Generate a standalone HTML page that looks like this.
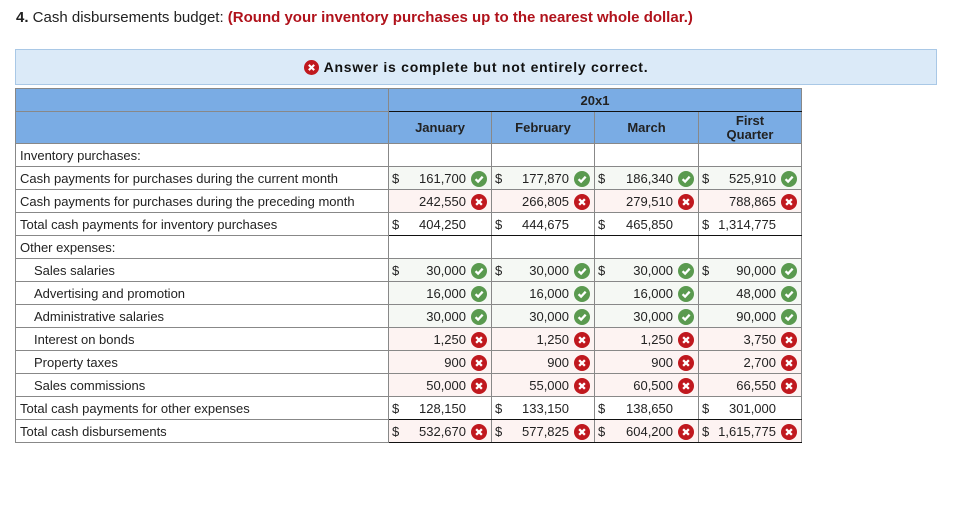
<!DOCTYPE html>
<html><head><meta charset="utf-8"><style>
body{margin:0;background:#fff;width:969px;height:509px;position:relative;font-family:"Liberation Sans",Arial,sans-serif;color:#222;overflow:hidden}
.title{position:absolute;left:16px;top:9px;font-size:15px;color:#222}
.title b.r{color:#b0121b}
.banner{position:absolute;left:15px;top:49px;width:920px;height:34px;background:#dbeaf8;border:1px solid #a9c8e6;text-align:center;font-size:14px;font-weight:bold;line-height:35px;color:#111;letter-spacing:0.75px}
.banner svg{vertical-align:-3px;margin-right:5px}
table{position:absolute;left:15px;top:88px;border-collapse:collapse;table-layout:fixed;font-size:13px}
td{border:1px solid #888;height:22px;padding:0;white-space:nowrap}
.h{background:#7aace4;color:#222;font-weight:bold;text-align:center;font-size:13px}
.l{padding-left:4px}
.i{padding-left:18px}
.d{position:relative}
.d .s{position:absolute;left:3px;top:4px}
.d .n{position:absolute;right:25px;top:4px}
.d svg{position:absolute;right:4px;top:4px}
.g{background:#f5f8f4}.x{background:#fdf3f2}
.tb{border-top:1px solid #111}
.bb{border-bottom:1px solid #111}
</style></head><body>
<div class="title"><b>4.</b> Cash disbursements budget: <b class="r">(Round your inventory purchases up to the nearest whole dollar.)</b></div>
<div class="banner"><svg width="15" height="15" viewBox="0 0 14 14"><circle cx="7" cy="7" r="7" fill="#c0181e"/><path d="M4.5 4.5L9.5 9.5M9.5 4.5L4.5 9.5" stroke="#fff" stroke-width="2"/></svg>Answer is complete but not entirely correct.</div>
<svg width="0" height="0" style="position:absolute"><defs>
<symbol id="ok" viewBox="0 0 14 14"><circle cx="7" cy="7" r="7" fill="#5a9a4f"/><path d="M4 7.2L6.2 9.3L10.2 5" stroke="#fff" stroke-width="2" fill="none"/></symbol>
<symbol id="no" viewBox="0 0 14 14"><circle cx="7" cy="7" r="7" fill="#c0181e"/><path d="M4.5 4.5L9.5 9.5M9.5 4.5L4.5 9.5" stroke="#fff" stroke-width="2"/></symbol>
</defs></svg>
<table>
<colgroup><col style="width:373px"><col style="width:103px"><col style="width:103px"><col style="width:104px"><col style="width:103px"></colgroup>
<tr><td class="h"></td><td class="h" colspan="4" style="border-bottom:1px solid #111">20x1</td></tr>
<tr><td class="h" style="height:31px"></td><td class="h">January</td><td class="h">February</td><td class="h">March</td><td class="h" style="line-height:14px">First<br>Quarter</td></tr>
<tr><td class="l">Inventory purchases:</td><td></td><td></td><td></td><td></td></tr>
<tr><td class="l">Cash payments for purchases during the current month</td>
<td class="d g"><span class="s">$</span><span class="n">161,700</span><svg width="16" height="16"><use href="#ok"/></svg></td>
<td class="d g"><span class="s">$</span><span class="n">177,870</span><svg width="16" height="16"><use href="#ok"/></svg></td>
<td class="d g"><span class="s">$</span><span class="n">186,340</span><svg width="16" height="16"><use href="#ok"/></svg></td>
<td class="d g"><span class="s">$</span><span class="n">525,910</span><svg width="16" height="16"><use href="#ok"/></svg></td></tr>
<tr><td class="l">Cash payments for purchases during the preceding month</td>
<td class="d x"><span class="n">242,550</span><svg width="16" height="16"><use href="#no"/></svg></td>
<td class="d x"><span class="n">266,805</span><svg width="16" height="16"><use href="#no"/></svg></td>
<td class="d x"><span class="n">279,510</span><svg width="16" height="16"><use href="#no"/></svg></td>
<td class="d x"><span class="n">788,865</span><svg width="16" height="16"><use href="#no"/></svg></td></tr>
<tr><td class="l">Total cash payments for inventory purchases</td>
<td class="d tb bb"><span class="s">$</span><span class="n">404,250</span></td>
<td class="d tb bb"><span class="s">$</span><span class="n">444,675</span></td>
<td class="d tb bb"><span class="s">$</span><span class="n">465,850</span></td>
<td class="d tb bb"><span class="s">$</span><span class="n">1,314,775</span></td></tr>
<tr><td class="l">Other expenses:</td><td></td><td></td><td></td><td></td></tr>
<tr><td class="i">Sales salaries</td>
<td class="d g"><span class="s">$</span><span class="n">30,000</span><svg width="16" height="16"><use href="#ok"/></svg></td>
<td class="d g"><span class="s">$</span><span class="n">30,000</span><svg width="16" height="16"><use href="#ok"/></svg></td>
<td class="d g"><span class="s">$</span><span class="n">30,000</span><svg width="16" height="16"><use href="#ok"/></svg></td>
<td class="d g"><span class="s">$</span><span class="n">90,000</span><svg width="16" height="16"><use href="#ok"/></svg></td></tr>
<tr><td class="i">Advertising and promotion</td>
<td class="d g"><span class="n">16,000</span><svg width="16" height="16"><use href="#ok"/></svg></td>
<td class="d g"><span class="n">16,000</span><svg width="16" height="16"><use href="#ok"/></svg></td>
<td class="d g"><span class="n">16,000</span><svg width="16" height="16"><use href="#ok"/></svg></td>
<td class="d g"><span class="n">48,000</span><svg width="16" height="16"><use href="#ok"/></svg></td></tr>
<tr><td class="i">Administrative salaries</td>
<td class="d g"><span class="n">30,000</span><svg width="16" height="16"><use href="#ok"/></svg></td>
<td class="d g"><span class="n">30,000</span><svg width="16" height="16"><use href="#ok"/></svg></td>
<td class="d g"><span class="n">30,000</span><svg width="16" height="16"><use href="#ok"/></svg></td>
<td class="d g"><span class="n">90,000</span><svg width="16" height="16"><use href="#ok"/></svg></td></tr>
<tr><td class="i">Interest on bonds</td>
<td class="d x"><span class="n">1,250</span><svg width="16" height="16"><use href="#no"/></svg></td>
<td class="d x"><span class="n">1,250</span><svg width="16" height="16"><use href="#no"/></svg></td>
<td class="d x"><span class="n">1,250</span><svg width="16" height="16"><use href="#no"/></svg></td>
<td class="d x"><span class="n">3,750</span><svg width="16" height="16"><use href="#no"/></svg></td></tr>
<tr><td class="i">Property taxes</td>
<td class="d x"><span class="n">900</span><svg width="16" height="16"><use href="#no"/></svg></td>
<td class="d x"><span class="n">900</span><svg width="16" height="16"><use href="#no"/></svg></td>
<td class="d x"><span class="n">900</span><svg width="16" height="16"><use href="#no"/></svg></td>
<td class="d x"><span class="n">2,700</span><svg width="16" height="16"><use href="#no"/></svg></td></tr>
<tr><td class="i">Sales commissions</td>
<td class="d x"><span class="n">50,000</span><svg width="16" height="16"><use href="#no"/></svg></td>
<td class="d x"><span class="n">55,000</span><svg width="16" height="16"><use href="#no"/></svg></td>
<td class="d x"><span class="n">60,500</span><svg width="16" height="16"><use href="#no"/></svg></td>
<td class="d x"><span class="n">66,550</span><svg width="16" height="16"><use href="#no"/></svg></td></tr>
<tr><td class="l">Total cash payments for other expenses</td>
<td class="d tb bb"><span class="s">$</span><span class="n">128,150</span></td>
<td class="d tb bb"><span class="s">$</span><span class="n">133,150</span></td>
<td class="d tb bb"><span class="s">$</span><span class="n">138,650</span></td>
<td class="d tb bb"><span class="s">$</span><span class="n">301,000</span></td></tr>
<tr><td class="l">Total cash disbursements</td>
<td class="d x bb"><span class="s">$</span><span class="n">532,670</span><svg width="16" height="16"><use href="#no"/></svg></td>
<td class="d x bb"><span class="s">$</span><span class="n">577,825</span><svg width="16" height="16"><use href="#no"/></svg></td>
<td class="d x bb"><span class="s">$</span><span class="n">604,200</span><svg width="16" height="16"><use href="#no"/></svg></td>
<td class="d x bb"><span class="s">$</span><span class="n">1,615,775</span><svg width="16" height="16"><use href="#no"/></svg></td></tr>
</table>
</body></html>
